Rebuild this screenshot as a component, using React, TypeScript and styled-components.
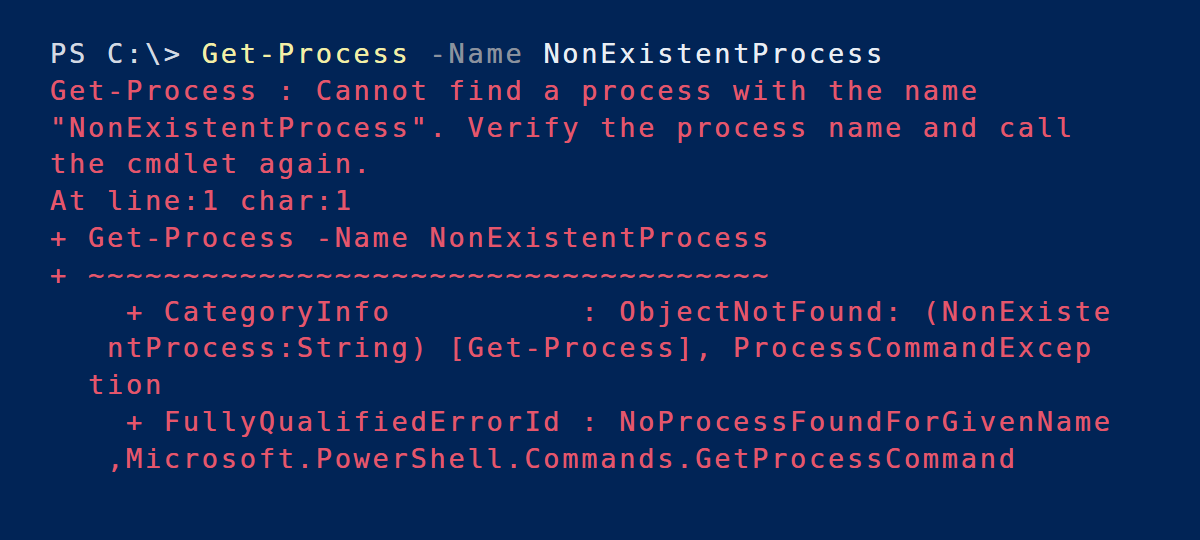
import React from "react";
import styled, { createGlobalStyle } from "styled-components";

const Global = createGlobalStyle`
  html, body { margin: 0; padding: 0; background: #012456; }
  body { width: 1200px; height: 540px; overflow: hidden; }
`;

const Terminal = styled.div`
  width: 1200px;
  height: 540px;
  box-sizing: border-box;
  background: #012456;
  padding: 36px 0 0 50px;
  display: flex;
  flex-direction: column;
  font-family: "DejaVu Sans Mono", "Liberation Mono", monospace;
  font-size: 27px;
  letter-spacing: 2.72px;
  line-height: 36.8px;
  -webkit-font-smoothing: antialiased;
`;

const Line = styled.div<{ $tone?: "error" | "plain" }>`
  white-space: pre;
  height: 36.8px;
  color: ${(p) => (p.$tone === "error" ? "#e5566c" : "#d3d9e3")};
  text-shadow: 0 0 0.4px currentColor;
`;

const Token = styled.span<{ $kind: "prompt" | "cmd" | "param" | "arg" }>`
  color: ${(p) =>
    p.$kind === "cmd"
      ? "#f3efa6"
      : p.$kind === "param"
      ? "#8b929e"
      : p.$kind === "arg"
      ? "#e9eef5"
      : "#d3d9e3"};
`;

const errorLines = [
  "Get-Process : Cannot find a process with the name",
  "\"NonExistentProcess\". Verify the process name and call",
  "the cmdlet again.",
  "At line:1 char:1",
  "+ Get-Process -Name NonExistentProcess",
  "+ ~~~~~~~~~~~~~~~~~~~~~~~~~~~~~~~~~~~~",
  "    + CategoryInfo          : ObjectNotFound: (NonExiste",
  "   ntProcess:String) [Get-Process], ProcessCommandExcep",
  "  tion",
  "    + FullyQualifiedErrorId : NoProcessFoundForGivenName",
  "   ,Microsoft.PowerShell.Commands.GetProcessCommand",
];

export default function App() {
  return (
    <>
      <Global />
      <Terminal>
        <Line $tone="plain">
          <Token $kind="prompt">PS C:\&gt; </Token>
          <Token $kind="cmd">Get-Process</Token>
          <Token $kind="param"> -Name</Token>
          <Token $kind="arg"> NonExistentProcess</Token>
        </Line>
        {errorLines.map((l, i) => (
          <Line key={i} $tone="error">
            {l}
          </Line>
        ))}
      </Terminal>
    </>
  );
}
